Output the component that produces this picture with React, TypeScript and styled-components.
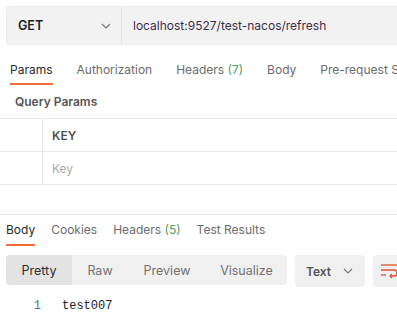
import React from "react";
import styled, { createGlobalStyle } from "styled-components";

const GlobalStyle = createGlobalStyle`
  html, body {
    margin: 0;
    padding: 0;
    background: #fff;
    font-family: Inter, "Noto Sans", sans-serif;
    overflow: hidden;
  }
`;

const Page = styled.div`
  width: 397px;
  height: 331px;
  overflow: hidden;
  background: #fff;
`;

const RequestBar = styled.div`
  display: flex;
  margin: 6px 0 0 6px;
  height: 39px;
  background: #f2f2f2;
  border: 1px solid #ececec;
  border-right: none;
  border-radius: 4px 0 0 4px;
  box-sizing: border-box;
`;

const Method = styled.div`
  width: 115px;
  display: flex;
  align-items: center;
  justify-content: space-between;
  padding: 0 10px 0 11px;
  box-sizing: border-box;
  border-right: 1px solid #e2e2e2;
  font-size: 12.5px;
  font-weight: 600;
  color: #212121;
`;

const Url = styled.div`
  flex: 1;
  display: flex;
  align-items: center;
  padding-left: 11px;
  font-size: 12px;
  color: #3b2d4a;
  white-space: nowrap;
`;

const TabRow = styled.div<{ $top: number; $h: number; $gap: number; $left: number }>`
  display: flex;
  gap: ${(p) => p.$gap}px;
  margin-top: ${(p) => p.$top}px;
  padding-left: ${(p) => p.$left}px;
  height: ${(p) => p.$h}px;
  white-space: nowrap;
  overflow: hidden;
`;

const Tab = styled.div<{ $active?: boolean }>`
  position: relative;
  flex-shrink: 0;
  font-size: 12px;
  color: ${(p) => (p.$active ? "#2b2b2b" : "#6b6b6b")};
  line-height: 24px;
  height: 100%;
  &::after {
    content: "";
    display: ${(p) => (p.$active ? "block" : "none")};
    position: absolute;
    left: 0;
    right: 0;
    bottom: 0;
    height: 2px;
    background: #f26b3a;
  }
`;

const LowerTab = styled(Tab)`
  line-height: 30px;
`;

const Count = styled.span<{ $color: string }>`
  color: ${(p) => p.$color};
`;

const SectionTitle = styled.div`
  font-size: 12px;
  font-weight: 600;
  color: #555;
  padding: 10px 0 0 15px;
  line-height: 14px;
  height: 33px;
  box-sizing: border-box;
`;

const Table = styled.div`
  border-top: 1px solid #e8e8e8;
`;

const TRow = styled.div`
  display: grid;
  grid-template-columns: 42px 1fr;
  height: 33px;
  box-sizing: border-box;
  border-bottom: 1px solid #e8e8e8;
`;

const Cell = styled.div<{ $head?: boolean }>`
  display: flex;
  align-items: center;
  padding-left: 9px;
  font-size: 12px;
  font-weight: ${(p) => (p.$head ? 600 : 400)};
  color: ${(p) => (p.$head ? "#505050" : "#a9a9a9")};
  border-left: 1px solid #e8e8e8;
`;

const Gutter = styled.div``;

const Divider = styled.div`
  margin-top: 29px;
  border-top: 1px solid #e8e8e8;
`;

const Toolbar = styled.div`
  display: flex;
  align-items: flex-start;
  margin: 9px 0 0 6px;
  gap: 8px;
  overflow: hidden;
`;

const Segmented = styled.div`
  display: flex;
  flex-shrink: 0;
  width: 281px;
  height: 30px;
  background: #f0f0f0;
  border-radius: 4px;
  overflow: hidden;
`;

const Segment = styled.div<{ $active?: boolean; $w: number }>`
  width: ${(p) => p.$w}px;
  display: flex;
  align-items: center;
  justify-content: center;
  font-size: 12.5px;
  color: ${(p) => (p.$active ? "#2e2e2e" : "#707070")};
  background: ${(p) => (p.$active ? "#e3e3e3" : "transparent")};
`;

const Select = styled.div`
  flex-shrink: 0;
  width: 70px;
  height: 32px;
  box-sizing: border-box;
  display: flex;
  align-items: center;
  justify-content: space-between;
  padding: 0 12px 0 11px;
  background: #f0f0f0;
  border-radius: 4px;
  font-size: 12px;
  font-weight: 600;
  color: #555;
`;

const IconBtn = styled.div`
  flex-shrink: 0;
  width: 40px;
  height: 32px;
  background: #f0f0f0;
  border-radius: 4px 0 0 4px;
  display: flex;
  align-items: center;
  padding-left: 8px;
  box-sizing: border-box;
`;

const Code = styled.div`
  display: flex;
  margin-top: 11px;
  font-family: "Liberation Mono", "DejaVu Sans Mono", monospace;
  font-size: 12px;
  line-height: 16px;
`;

const LineNo = styled.span`
  width: 41px;
  text-align: right;
  color: #4d7499;
`;

const LineText = styled.span`
  margin-left: 21px;
  color: #1a1a1a;
`;

const Chevron = ({ color = "#777" }: { color?: string }) => (
  <svg width="10" height="6" viewBox="0 0 10 6" fill="none">
    <path d="M1 1l4 4 4-4" stroke={color} strokeWidth="1.1" />
  </svg>
);

const WrapIcon = () => (
  <svg width="18" height="16" viewBox="0 0 18 16" fill="none" stroke="#e0522a" strokeWidth="1.3">
    <path d="M0 2h18" />
    <path d="M0 7h13a3 3 0 0 1 0 6H9" />
    <path d="M11 11l-2 2 2 2" />
    <path d="M0 12h5" />
  </svg>
);

export default function App() {
  return (
    <Page>
      <GlobalStyle />
      <RequestBar>
        <Method>
          GET
          <Chevron />
        </Method>
        <Url>localhost:9527/test-nacos/refresh</Url>
      </RequestBar>

      <TabRow $top={13} $h={27} $gap={24} $left={10}>
        <Tab $active>Params</Tab>
        <Tab>Authorization</Tab>
        <Tab>
          Headers <Count $color="#4ea05a">(7)</Count>
        </Tab>
        <Tab>Body</Tab>
        <Tab>Pre-request Script</Tab>
      </TabRow>

      <SectionTitle>Query Params</SectionTitle>
      <Table>
        <TRow>
          <Gutter />
          <Cell $head>KEY</Cell>
        </TRow>
        <TRow>
          <Gutter />
          <Cell>Key</Cell>
        </TRow>
      </Table>

      <Divider />

      <TabRow $top={0} $h={31} $gap={16} $left={6}>
        <LowerTab $active>Body</LowerTab>
        <LowerTab>Cookies</LowerTab>
        <LowerTab>
          Headers <Count $color="#4ea05a">(5)</Count>
        </LowerTab>
        <LowerTab>Test Results</LowerTab>
      </TabRow>

      <Toolbar>
        <Segmented>
          <Segment $active $w={66}>Pretty</Segment>
          <Segment $w={56}>Raw</Segment>
          <Segment $w={78}>Preview</Segment>
          <Segment $w={81}>Visualize</Segment>
        </Segmented>
        <Select>
          Text
          <Chevron />
        </Select>
        <IconBtn>
          <WrapIcon />
        </IconBtn>
      </Toolbar>

      <Code>
        <LineNo>1</LineNo>
        <LineText>test007</LineText>
      </Code>
    </Page>
  );
}
